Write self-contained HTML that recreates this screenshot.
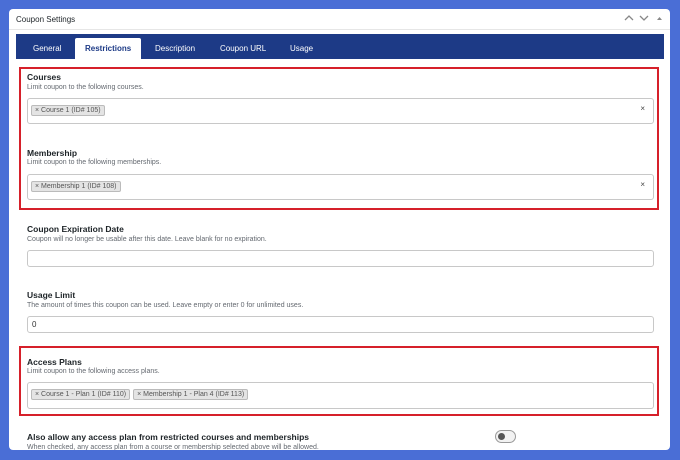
<!DOCTYPE html>
<html><head><style>
body{margin:0;width:680px;height:460px;background:#4a6ed6;font-family:"Liberation Sans",sans-serif;position:relative;overflow:hidden}
.panel{position:absolute;left:9px;top:9px;width:661px;height:441px;background:#fff;border-radius:4px;overflow:hidden}
.a{position:absolute}
.h{font-size:8px;color:#1d2327}
.lbl{font-size:8.5px;font-weight:bold;color:#1d2327;position:absolute;left:27px}
.d{font-size:7px;color:#646970;position:absolute;left:27px}
.in{position:absolute;left:27px;width:625px;border:1px solid #c8c8c8;border-radius:3px;background:#fff}
.tag{display:inline-block;font-size:7px;color:#555;background:#e4e4e4;border:1px solid #bbb;border-radius:2px;padding:1px 3px;margin:2px 0 0 3px}
.x{position:absolute;right:8px;top:5px;font-size:8px;color:#444}
.red{position:absolute;left:19px;width:636px;border:2px solid #d6202a}
.tab{position:absolute;top:44px;font-size:8px;color:#fff}
</style></head><body>
<div class="panel"></div>
<div class="a h" style="left:16px;top:15px">Coupon Settings</div>
<svg class="a" style="left:620px;top:12px" width="50" height="12" viewBox="0 0 50 12">
<path d="M5 8 L9 4 L13 8" fill="none" stroke="#888" stroke-width="1.3"/>
<path d="M20 4 L24 8 L28 4" fill="none" stroke="#888" stroke-width="1.3"/>
<path d="M37 8 L39.5 5 L42 8 Z" fill="#888"/>
</svg>
<div class="a" style="left:9px;top:29px;width:661px;height:1px;background:#e6e6e6"></div>
<div class="a" style="left:16px;top:34px;width:648px;height:25px;background:#1d3a86"></div>
<div class="a" style="left:75px;top:38px;width:66px;height:21px;background:#fff;border-radius:2px 2px 0 0"></div>
<div class="tab" style="left:33px">General</div>
<div class="tab" style="left:85px;color:#1d3a86;font-weight:bold">Restrictions</div>
<div class="tab" style="left:155px">Description</div>
<div class="tab" style="left:220px">Coupon URL</div>
<div class="tab" style="left:290px">Usage</div>

<div class="red" style="top:67px;height:139px"></div>
<div class="lbl" style="top:72px">Courses</div>
<div class="d" style="top:84px">Limit coupon to the following courses.</div>
<div class="in" style="top:98px;height:24px"><span class="tag">× Course 1 (ID# 105)</span><span class="x">×</span></div>
<div class="lbl" style="top:148px">Membership</div>
<div class="d" style="top:159px">Limit coupon to the following memberships.</div>
<div class="in" style="top:174px;height:24px"><span class="tag">× Membership 1 (ID# 108)</span><span class="x">×</span></div>

<div class="lbl" style="top:224px">Coupon Expiration Date</div>
<div class="d" style="top:236px">Coupon will no longer be usable after this date. Leave blank for no expiration.</div>
<div class="in" style="top:250px;height:15px"></div>
<div class="lbl" style="top:290px">Usage Limit</div>
<div class="d" style="top:302px">The amount of times this coupon can be used. Leave empty or enter 0 for unlimited uses.</div>
<div class="in" style="top:316px;height:15px"><span style="font-size:8px;position:absolute;left:4px;top:3px;color:#333">0</span></div>

<div class="red" style="top:346px;height:66px"></div>
<div class="lbl" style="top:357px">Access Plans</div>
<div class="d" style="top:368px">Limit coupon to the following access plans.</div>
<div class="in" style="top:382px;height:25px"><span class="tag">× Course 1 - Plan 1 (ID# 110)</span><span class="tag">× Membership 1 - Plan 4 (ID# 113)</span></div>

<div class="lbl" style="top:432px">Also allow any access plan from restricted courses and memberships</div>
<div class="d" style="top:444px">When checked, any access plan from a course or membership selected above will be allowed.</div>
<div class="a" style="left:495px;top:430px;width:19px;height:11px;border:1px solid #999;border-radius:7px;background:#f2f2f2"></div>
<div class="a" style="left:498px;top:433px;width:7px;height:7px;border-radius:50%;background:#555"></div>
<div class="a" style="left:0;top:450px;width:680px;height:10px;background:#4a6ed6"></div>
</body></html>
